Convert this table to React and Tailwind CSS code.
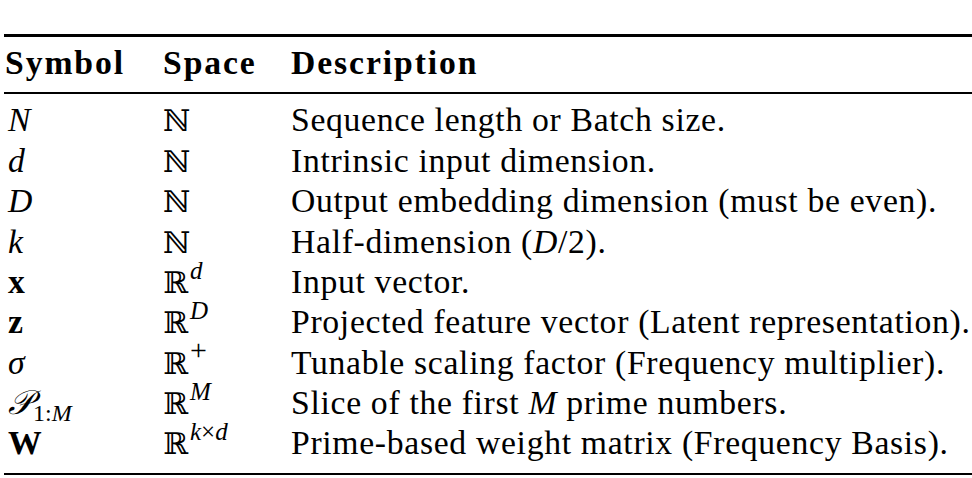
import React from "react";

const I = ({ children }) => <span className="italic">{children}</span>;
const B = ({ children }) => <span className="font-bold">{children}</span>;
const BB = ({ children }) => (
  <span className="font-['DejaVu_Serif'] text-[30px]">{children}</span>
);
const Sup = ({ children }) => (
  <span className="text-[25px] leading-[0px] align-[14px] pl-[2px]">{children}</span>
);

const rows = [
  { sym: <I>N</I>, space: <BB>ℕ</BB>, desc: "Sequence length or Batch size." },
  { sym: <I>d</I>, space: <BB>ℕ</BB>, desc: "Intrinsic input dimension." },
  { sym: <I>D</I>, space: <BB>ℕ</BB>, desc: "Output embedding dimension (must be even)." },
  {
    sym: <I>k</I>,
    space: <BB>ℕ</BB>,
    desc: (
      <>
        Half-dimension (<I>D</I>/2).
      </>
    ),
  },
  {
    sym: <B>x</B>,
    space: (
      <>
        <BB>ℝ</BB>
        <Sup>
          <I>d</I>
        </Sup>
      </>
    ),
    desc: "Input vector.",
  },
  {
    sym: <B>z</B>,
    space: (
      <>
        <BB>ℝ</BB>
        <Sup>
          <I>D</I>
        </Sup>
      </>
    ),
    desc: "Projected feature vector (Latent representation).",
  },
  {
    sym: <I>σ</I>,
    space: (
      <>
        <BB>ℝ</BB>
        <Sup>
          <span className="text-[30px]">+</span>
        </Sup>
      </>
    ),
    desc: "Tunable scaling factor (Frequency multiplier).",
  },
  {
    sym: (
      <>
        <span className="font-['DejaVu_Sans'] italic">𝒫</span>
        <span className="text-[24px] leading-[0px] align-[-7px] pl-[1px]">
          1:<I>M</I>
        </span>
      </>
    ),
    space: (
      <>
        <BB>ℝ</BB>
        <Sup>
          <I>M</I>
        </Sup>
      </>
    ),
    desc: (
      <>
        Slice of the first <I>M</I> prime numbers.
      </>
    ),
  },
  {
    sym: <B>W</B>,
    space: (
      <>
        <BB>ℝ</BB>
        <Sup>
          <I>k</I>×<I>d</I>
        </Sup>
      </>
    ),
    desc: "Prime-based weight matrix (Frequency Basis).",
  },
];

export default function App() {
  return (
    <div className="w-[972px] h-[478px] overflow-hidden bg-white text-black pt-[34px] pl-[4px] font-['Liberation_Serif',serif] text-[33.7px]">
      <div className="h-[2.7px] bg-black" />
      <div className="mt-[9.4px] ml-[1px] grid grid-cols-[158px_128px_1fr] h-[40.4px] leading-[34.3px] font-bold tracking-[1.9px] whitespace-nowrap">
        <div>Symbol</div>
        <div>Space</div>
        <div>Description</div>
      </div>
      <div className="mt-[5.8px] h-[1.7px] bg-black" />
      <div className="mt-[9.4px] ml-[1px] flex flex-col">
        {rows.map((r, i) => (
          <div
            key={i}
            className="grid grid-cols-[158px_128px_1fr] h-[40.4px] leading-[34.3px] whitespace-nowrap"
          >
            <div className="pl-[3px]">{r.sym}</div>
            <div>{r.space}</div>
            <div className="tracking-[0.68px]">{r.desc}</div>
          </div>
        ))}
      </div>
      <div className="mt-[5.8px] h-[2.7px] bg-black" />
    </div>
  );
}
